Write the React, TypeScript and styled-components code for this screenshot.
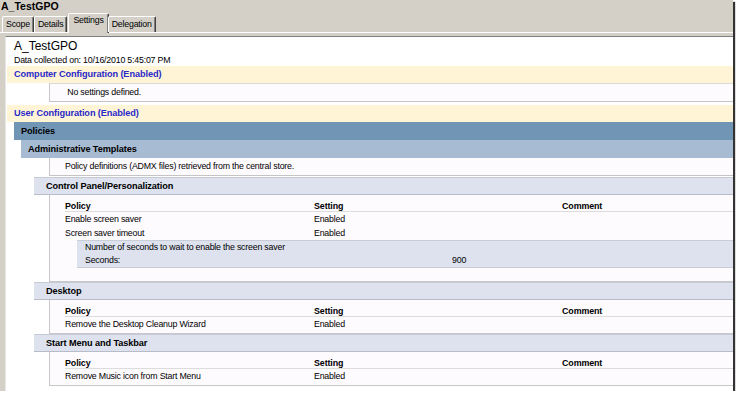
import React from "react";
import styled, { createGlobalStyle, css } from "styled-components";

const GlobalStyle = createGlobalStyle`
  html, body {
    margin: 0;
    padding: 0;
    background: #ffffff;
  }
  body {
    font-family: "Liberation Sans", Arial, sans-serif;
    font-size: 8.8px;
    letter-spacing: -0.2px;
    color: #000;
  }
`;

const Window = styled.div`
  width: 733px;
  height: 391px;
  background: #d4d0c8;
  box-shadow: 2px 2px 1px rgba(0, 0, 0, 0.8);
  display: flex;
  flex-direction: column;
  overflow: hidden;
`;

const Title = styled.div`
  height: 14px;
  line-height: 13px;
  padding-left: 1px;
  font-size: 10.5px;
  font-weight: bold;
  letter-spacing: 0;
`;

const TabStrip = styled.div`
  position: relative;
  z-index: 1;
  display: flex;
  align-items: flex-end;
  height: 18px;
  padding-left: 2px;
`;

const Tab = styled.div<{ $active?: boolean }>`
  height: 15px;
  padding: 0 3px;
  font-size: 8.8px;
  line-height: 14px;
  background: #d4d0c8;
  border: 1px solid;
  border-bottom: none;
  border-color: #ffffff #404040 transparent #ffffff;
  border-radius: 2px 2px 0 0;
  box-shadow: inset -1px 0 0 #808080;

  ${(p) =>
    p.$active &&
    css`
      height: 19px;
      line-height: 13px;
      margin: 0 -1px -1px 1px;
      padding: 0 4px;
    `}
`;

const Panel = styled.div`
  flex: 1;
  display: flex;
  flex-direction: column;
  border-top: 1px solid #ffffff;
  padding: 3px 0 0 5px;
  min-height: 0;
`;

const Content = styled.div`
  flex: 1;
  background: #ffffff;
  border-top: 1px solid #808080;
  border-left: 1px solid #e6e6e6;
  overflow: hidden;
`;

const ReportName = styled.div`
  padding: 1px 0 0 8px;
  font-size: 12px;
  letter-spacing: 0;
  line-height: 16px;
`;

const Collected = styled.div`
  padding-left: 8px;
  line-height: 12px;
`;

type Tone = "config" | "policies" | "admin" | "category";

const barTones: Record<Tone, ReturnType<typeof css>> = {
  config: css`
    background: #fff5d6;
    color: #2a2ac8;
  `,
  policies: css`
    background: #7195b5;
  `,
  admin: css`
    background: #a7bcd3;
  `,
  category: css`
    background: #dde2ee;
    border-top: 1px solid #c6cad5;
    border-bottom: 1px solid #b8bcc8;
  `,
};

const Bar = styled.div<{ $indent: number; $tone: Tone; $h: number; $pad?: number }>`
  margin-left: ${(p) => p.$indent}px;
  height: ${(p) => p.$h}px;
  line-height: ${(p) => p.$h}px;
  padding-left: ${(p) => p.$pad ?? 7}px;
  font-size: 9.2px;
  letter-spacing: -0.1px;
  font-weight: bold;
  ${(p) => barTones[p.$tone]}
`;

const Note = styled.div<{ $h: number; $gap: number; $top?: boolean }>`
  margin-left: 43px;
  margin-bottom: ${(p) => p.$gap}px;
  height: ${(p) => p.$h}px;
  line-height: ${(p) => p.$h}px;
  padding-left: 15px;
  background: #fefbff;
  border-left: 1px solid #c8c8c8;
  border-bottom: 1px solid #c4c4c4;
  ${(p) =>
    p.$top &&
    css`
      border-top: 1px solid #dadada;
    `}
`;

const CategoryBody = styled.div<{ $pad: number }>`
  margin-left: 43px;
  padding-bottom: ${(p) => p.$pad}px;
  background: #fefbff;
  border-left: 1px solid #c8c8c8;
  border-bottom: 1px solid #c8c8c8;
`;

const Table = styled.div`
  display: grid;
  grid-template-columns: 249px 248px 1fr;
  padding-left: 15px;
`;

const HeadCell = styled.div`
  height: 17px;
  padding-top: 6px;
  box-sizing: border-box;
  line-height: 11px;
  font-size: 8.9px;
  letter-spacing: -0.1px;
  font-weight: bold;
  border-bottom: 1px solid #dcdcdc;
`;

const Cell = styled.div`
  height: 14px;
  line-height: 14px;
  white-space: nowrap;
`;

const Detail = styled.div`
  margin: 0 0 13px 27px;
  padding-left: 8px;
  background: #dde2ee;
  border-top: 1px solid #c9cdd8;
  border-bottom: 1px solid #c9cdd8;
  display: grid;
  grid-template-columns: 367px 1fr;
`;

const DetailCell = styled.div<{ $span?: boolean }>`
  height: 13px;
  line-height: 13px;
  ${(p) =>
    p.$span &&
    css`
      grid-column: 1 / -1;
    `}
`;

interface PolicyRow {
  policy: string;
  setting: string;
  comment?: string;
}

interface Category {
  name: string;
  rows: PolicyRow[];
  detail?: { caption: string; label: string; value: string };
}

const categories: Category[] = [
  {
    name: "Control Panel/Personalization",
    rows: [
      { policy: "Enable screen saver", setting: "Enabled" },
      { policy: "Screen saver timeout", setting: "Enabled" },
    ],
    detail: {
      caption: "Number of seconds to wait to enable the screen saver",
      label: "Seconds:",
      value: "900",
    },
  },
  {
    name: "Desktop",
    rows: [{ policy: "Remove the Desktop Cleanup Wizard", setting: "Enabled" }],
  },
  {
    name: "Start Menu and Taskbar",
    rows: [{ policy: "Remove Music icon from Start Menu", setting: "Enabled" }],
  },
];

const CategorySection: React.FC<{ cat: Category }> = ({ cat }) => (
  <>
    <Bar $indent={28} $tone="category" $h={16} $pad={12}>
      {cat.name}
    </Bar>
    <CategoryBody $pad={cat.detail ? 0 : 2}>
      <Table>
        <HeadCell>Policy</HeadCell>
        <HeadCell>Setting</HeadCell>
        <HeadCell>Comment</HeadCell>
        {cat.rows.map((r) => (
          <React.Fragment key={r.policy}>
            <Cell>{r.policy}</Cell>
            <Cell>{r.setting}</Cell>
            <Cell>{r.comment ?? ""}</Cell>
          </React.Fragment>
        ))}
      </Table>
      {cat.detail && (
        <Detail>
          <DetailCell $span>{cat.detail.caption}</DetailCell>
          <DetailCell>{cat.detail.label}</DetailCell>
          <DetailCell>{cat.detail.value}</DetailCell>
        </Detail>
      )}
    </CategoryBody>
  </>
);

const tabs = ["Scope", "Details", "Settings", "Delegation"];

export default function App() {
  return (
    <>
      <GlobalStyle />
      <Window>
        <Title>A_TestGPO</Title>
        <TabStrip>
          {tabs.map((t) => (
            <Tab key={t} $active={t === "Settings"}>
              {t}
            </Tab>
          ))}
        </TabStrip>
        <Panel>
          <Content>
            <ReportName>A_TestGPO</ReportName>
            <Collected>Data collected on: 10/16/2010 5:45:07 PM</Collected>
            <Bar $indent={1} $tone="config" $h={17}>
              Computer Configuration (Enabled)
            </Bar>
            <Note $h={17} $gap={3} $top>
              &nbsp;No settings defined.
            </Note>
            <Bar $indent={1} $tone="config" $h={17}>
              User Configuration (Enabled)
            </Bar>
            <Bar $indent={8} $tone="policies" $h={18}>
              Policies
            </Bar>
            <Bar $indent={15} $tone="admin" $h={18}>
              Administrative Templates
            </Bar>
            <Note $h={17} $gap={1}>
              Policy definitions (ADMX files) retrieved from the central store.
            </Note>
            {categories.map((c) => (
              <CategorySection key={c.name} cat={c} />
            ))}
          </Content>
        </Panel>
      </Window>
    </>
  );
}
